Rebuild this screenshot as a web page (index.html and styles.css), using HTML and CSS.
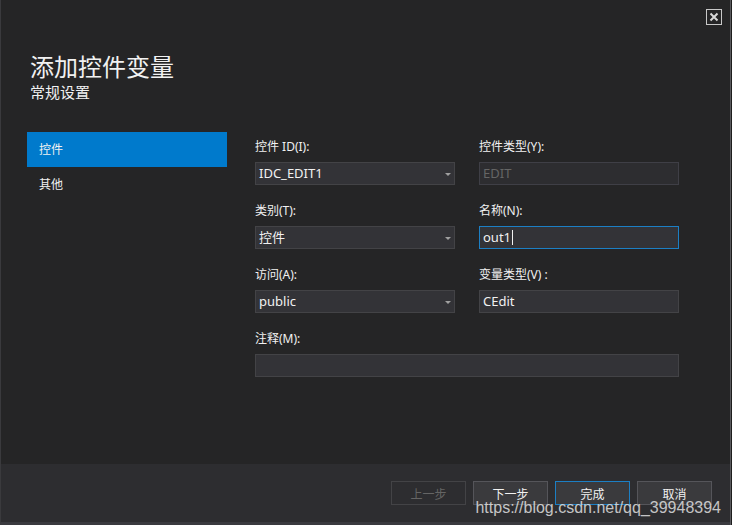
FILE: index.html
```html
<!DOCTYPE html>
<html>

<head>
  <meta http-equiv="Content-Type" content="text/html; charset=utf-8">
  <link rel="stylesheet" href="styles.css">
</head>

<body>

  <div class="dialog">
    <button class="close" title="关闭">
      <svg width="16" height="16" viewBox="0 0 16 16">
        <rect x="0.5" y="0.5" width="15" height="15" fill="none" stroke="#c8c8c8" stroke-width="1"/>
        <path d="M4.5 4.5 L11.5 11.5 M11.5 4.5 L4.5 11.5" stroke="#d8d8d8" stroke-width="2"/>
      </svg>
    </button>

    <div class="header">
      <h1>添加控件变量</h1>
      <h2>常规设置</h2>
    </div>

    <div class="main">
      <ul class="nav">
        <li class="active">控件</li>
        <li>其他</li>
      </ul>

      <div class="form">
        <div class="field">
          <label>控件 ID(I):</label>
          <div class="input select">IDC_EDIT1<span class="arrow"></span></div>
        </div>
        <div class="field">
          <label>控件类型(Y):</label>
          <div class="input disabled">EDIT</div>
        </div>
        <div class="field">
          <label>类别(T):</label>
          <div class="input select">控件<span class="arrow"></span></div>
        </div>
        <div class="field">
          <label>名称(N):</label>
          <div class="input focus">out1<span class="caret"></span></div>
        </div>
        <div class="field">
          <label>访问(A):</label>
          <div class="input select">public<span class="arrow"></span></div>
        </div>
        <div class="field">
          <label>变量类型(V) :</label>
          <div class="input">CEdit</div>
        </div>
        <div class="field wide">
          <label>注释(M):</label>
          <div class="input"></div>
        </div>
      </div>
    </div>

    <div class="footer">
      <button class="btn" disabled>上一步</button>
      <button class="btn">下一步</button>
      <button class="btn primary">完成</button>
      <button class="btn">取消</button>
    </div>

    <div class="watermark">https://blog.csdn.net/qq_39948394</div>
  </div>

</body>

</html>
```

FILE: styles.css
```css
body {
  margin: 0;
  background-color: #1e1e1e;
  font-family: "Noto Sans", "Noto Sans CJK SC", sans-serif;
  color: #f1f1f1;
}

.dialog {
  position: relative;
  width: 729px;
  height: 525px;
  display: flex;
  flex-direction: column;
  background-color: #252526;
  border-left: 1px solid #3a3a3d;
  border-right: 1px solid #5a5a5e;
}

.close {
  position: absolute;
  top: 9px;
  right: 8px;
  width: 16px;
  height: 16px;
  padding: 0;
  border: 0;
  background: none;
}

.close svg {
  display: block;
}

.header {
  padding: 52px 0 0 29px;
  height: 80px;
}

h1 {
  margin: 0;
  font-size: 24px;
  line-height: 30px;
  font-weight: normal;
}

h2 {
  margin: 0;
  font-size: 15px;
  line-height: 20px;
  font-weight: normal;
}

.main {
  flex: 1;
  display: flex;
}

.nav {
  list-style: none;
  margin: 0 0 0 26px;
  padding: 0;
  width: 200px;
}

.nav li {
  height: 36px;
  line-height: 36px;
  padding-left: 12px;
  font-size: 12px;
}

.nav li.active {
  height: 35px;
  line-height: 35px;
  background-color: #007acc;
}

.form {
  margin: 7px 0 0 28px;
  display: grid;
  grid-template-columns: 200px 200px;
  column-gap: 24px;
  row-gap: 18px;
  align-content: start;
}

.field.wide {
  grid-column: 1 / 3;
}

.field label {
  display: block;
  height: 16px;
  line-height: 16px;
  margin-bottom: 7px;
  font-size: 12px;
}

.input {
  position: relative;
  box-sizing: border-box;
  height: 23px;
  line-height: 21px;
  padding-left: 3px;
  font-size: 13px;
  background-color: #333337;
  border: 1px solid #434346;
}

.input.disabled {
  background-color: #2d2d30;
  color: #656565;
  border-color: #3f3f46;
}

.input.focus {
  border-color: #1c7fc4;
}

.caret {
  display: inline-block;
  width: 1px;
  height: 15px;
  margin-left: 1px;
  vertical-align: -3px;
  background-color: #f1f1f1;
}

.arrow {
  position: absolute;
  right: 3px;
  top: 10px;
  width: 0;
  height: 0;
  border-left: 3px solid transparent;
  border-right: 3px solid transparent;
  border-top: 3px solid #a0a0a0;
}

.footer {
  height: 61px;
  box-sizing: border-box;
  padding: 17px 18px 0 0;
  display: flex;
  justify-content: flex-end;
  gap: 7px;
  background-color: #2d2d30;
  border-bottom: 3px solid #3a3a3f;
}

.btn {
  width: 75px;
  height: 24px;
  padding: 0;
  font-family: "Noto Sans CJK SC", sans-serif;
  font-size: 12px;
  color: #f1f1f1;
  background-color: #3a3a3d;
  border: 1px solid #55555a;
}

.btn:disabled {
  color: #656565;
  background-color: #2d2d30;
  border-color: #434346;
}

.btn.primary {
  border-color: #1c7fc4;
}

.watermark {
  position: absolute;
  right: 9px;
  bottom: 8px;
  font-family: "Liberation Sans", Arial, sans-serif;
  font-size: 16px;
  color: rgba(225, 225, 225, 0.85);
}
```
